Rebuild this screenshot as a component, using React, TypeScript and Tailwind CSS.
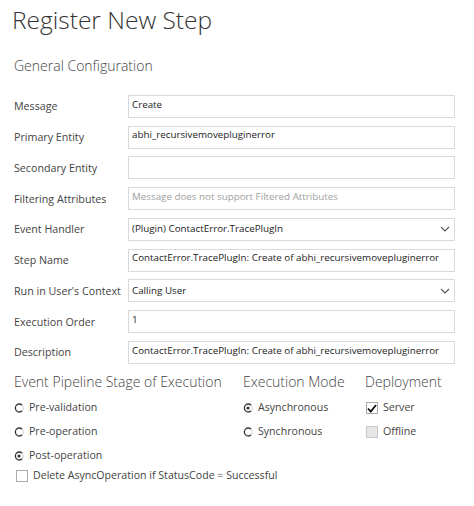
import React from "react";

type Field = {
  label: string;
  value?: string;
  placeholder?: string;
  select?: boolean;
};

const fields: Field[] = [
  { label: "Message", value: "Create" },
  { label: "Primary Entity", value: "abhi_recursivemovepluginerror" },
  { label: "Secondary Entity" },
  { label: "Filtering Attributes", placeholder: "Message does not support Filtered Attributes" },
  { label: "Event Handler", value: "(Plugin) ContactError.TracePlugIn", select: true },
  { label: "Step Name", value: "ContactError.TracePlugIn: Create of abhi_recursivemovepluginerror" },
  { label: "Run in User's Context", value: "Calling User", select: true },
  { label: "Execution Order", value: "1" },
  { label: "Description", value: "ContactError.TracePlugIn: Create of abhi_recursivemovepluginerror" },
];

function Chevron() {
  return (
    <svg width="10" height="6" viewBox="0 0 10 6" className="shrink-0">
      <path d="M1 1l4 4 4-4" fill="none" stroke="#555" strokeWidth="1.1" />
    </svg>
  );
}

function Radio({ checked }: { checked?: boolean }) {
  return (
    <svg width="10" height="10" viewBox="0 0 10 10" className="shrink-0">
      <path d="M8.2 2.2A4 4 0 1 0 8.2 7.8" fill="none" stroke="#3a3a3a" strokeWidth="1.3" />
      <path d="M8.2 2.2A4 4 0 0 1 8.2 7.8" fill="none" stroke="#d4d4d4" strokeWidth="1" />
      {checked && <circle cx="5" cy="5" r="1.6" fill="#333" />}
    </svg>
  );
}

function Check({ checked, disabled }: { checked?: boolean; disabled?: boolean }) {
  return (
    <span
      className={
        "flex h-[12px] w-[12px] shrink-0 items-center justify-center border " +
        (disabled ? "border-[#c8c8c8] bg-[#e6e6e6]" : "border-[#aaa] bg-white")
      }
    >
      {checked && (
        <svg width="10" height="9" viewBox="0 0 10 9">
          <path d="M1 4.5l2.8 3L9 1" fill="none" stroke="#111" strokeWidth="1.8" />
        </svg>
      )}
    </span>
  );
}

export default function App() {
  return (
    <div className="h-[506px] w-[474px] overflow-hidden bg-white font-['Open_Sans',sans-serif] text-[#444]">
      <h1 className="pl-[12px] pt-[5px] text-[24.5px] font-light leading-[30px] text-[#333]">
        Register New Step
      </h1>
      <h2 className="pl-[14px] pt-[22px] text-[14px] font-light leading-[18px] text-[#444]">
        General Configuration
      </h2>

      {/* Form rows */}
      <div className="mt-[16px] flex flex-col pl-[14px] pr-[19px]">
        {fields.map((f) => (
          <div key={f.label} className="flex h-[30.75px] items-center">
            <span className="w-[114px] shrink-0 whitespace-nowrap text-[10.7px] text-[#444]">
              {f.label}
            </span>
            <div className="flex h-[23px] min-w-0 flex-1 items-center justify-between border border-[#d9d9d9] bg-white pl-[3px] pr-[4px]">
              <span
                className={
                  "truncate text-[9.8px] " +
                  (f.placeholder ? "text-[#a0a0a0]" : "text-[#222]") +
                  (f.select ? "" : " -mt-[3px]")
                }
              >
                {f.value ?? f.placeholder ?? ""}
              </span>
              {f.select && <Chevron />}
            </div>
          </div>
        ))}
      </div>

      {/* Options */}
      <div className="mt-[5px] flex pl-[14px]">
        <div className="w-[229px]">
          <div className="text-[14px] font-light leading-[18px] text-[#444]">
            Event Pipeline Stage of Execution
          </div>
          <div className="mt-[8px] flex flex-col gap-[5px] text-[10.6px]">
            <label className="flex h-[19px] items-center gap-[5px]">
              <Radio /> Pre-validation
            </label>
            <label className="flex h-[19px] items-center gap-[5px]">
              <Radio /> Pre-operation
            </label>
            <label className="flex h-[19px] items-center gap-[5px]">
              <Radio checked /> Post-operation
            </label>
          </div>
        </div>
        <div className="w-[122px]">
          <div className="text-[14px] font-light leading-[18px] text-[#444]">Execution Mode</div>
          <div className="mt-[8px] flex flex-col gap-[5px] text-[10.6px]">
            <label className="flex h-[19px] items-center gap-[5px]">
              <Radio checked /> Asynchronous
            </label>
            <label className="flex h-[19px] items-center gap-[5px]">
              <Radio /> Synchronous
            </label>
          </div>
        </div>
        <div>
          <div className="text-[14px] font-light leading-[18px] text-[#444]">Deployment</div>
          <div className="mt-[8px] flex flex-col gap-[5px] pl-[1px] text-[10.6px]">
            <label className="flex h-[19px] items-center gap-[5px]">
              <Check checked /> Server
            </label>
            <label className="flex h-[19px] items-center gap-[5px]">
              <Check disabled /> Offline
            </label>
          </div>
        </div>
      </div>
      <label className="mt-[2px] flex h-[16px] items-center gap-[5px] pl-[16px] text-[10.6px]">
        <Check /> Delete AsyncOperation if StatusCode = Successful
      </label>
    </div>
  );
}
